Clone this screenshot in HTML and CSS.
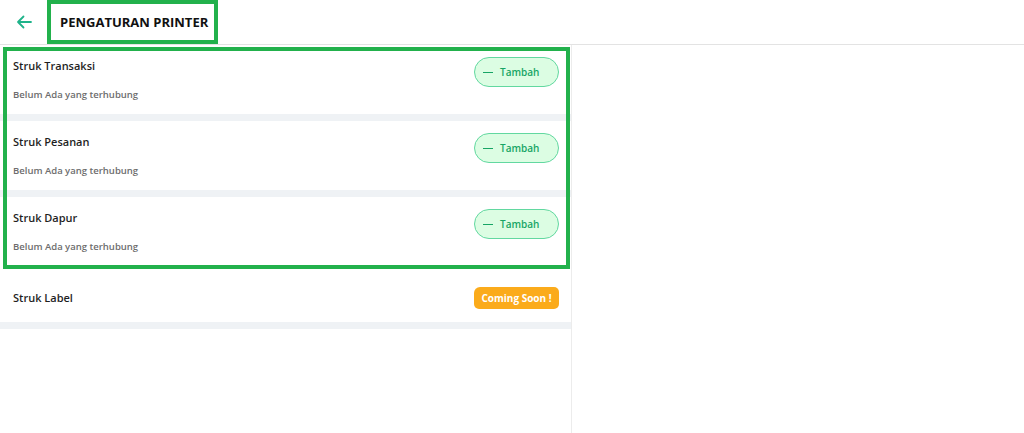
FILE: index.html
```html
<!DOCTYPE html>
<html lang="id">
<head>
<meta charset="utf-8">
<title>Pengaturan Printer</title>
<link rel="stylesheet" href="styles.css">
</head>
<body>
<header class="topbar">
  <button class="back" aria-label="Kembali">
    <svg width="16" height="14" viewBox="0 0 16 14" fill="none" stroke="#1fb38a" stroke-width="1.8" stroke-linecap="round" stroke-linejoin="round"><path d="M15 7H2M7.5 1.5L2 7l5.5 5.5"/></svg>
  </button>
  <h1 class="title">PENGATURAN PRINTER</h1>
</header>
<div class="layout">
  <section class="panel">
    <div class="group">
      <div class="row">
        <div class="info">
          <div class="name">Struk Transaksi</div>
          <div class="status">Belum Ada yang terhubung</div>
        </div>
        <button class="add"><span class="dash"></span>Tambah</button>
      </div>
      <div class="row">
        <div class="info">
          <div class="name">Struk Pesanan</div>
          <div class="status">Belum Ada yang terhubung</div>
        </div>
        <button class="add"><span class="dash"></span>Tambah</button>
      </div>
      <div class="row last">
        <div class="info">
          <div class="name">Struk Dapur</div>
          <div class="status">Belum Ada yang terhubung</div>
        </div>
        <button class="add"><span class="dash"></span>Tambah</button>
      </div>
    </div>
    <div class="row label-row">
      <div class="name">Struk Label</div>
      <span class="soon">Coming Soon !</span>
    </div>
  </section>
  <div class="blank"></div>
</div>
</body>
</html>
```
FILE: styles.css
```css
*, *::before, *::after { box-sizing: border-box; }
html, body { margin: 0; padding: 0; height: 100%; background: #fff; }
body {
  font-family: "Open Sans", "Noto Sans", sans-serif;
  color: #1f1f1f;
  display: flex;
  flex-direction: column;
}
.topbar {
  height: 45px;
  flex: none;
  display: flex;
  align-items: center;
  border-bottom: 1px solid #e3e3e3;
}
.back {
  border: 0;
  background: none;
  padding: 0;
  margin: 0 15px 0 16px;
  width: 16px;
  height: 14px;
  display: flex;
  cursor: pointer;
}
.title {
  margin: 0;
  height: 44px;
  width: 171px;
  border: 4px solid #22b14c;
  display: flex;
  align-items: center;
  padding-left: 9px;
  font-size: 13px;
  font-weight: 700;
  color: #111;
  white-space: nowrap;
}
.layout {
  flex: 1;
  display: flex;
}
.panel {
  width: 572px;
  border-right: 1px solid #ececec;
}
.blank { flex: 1; }
.group { position: relative; }
.group::after {
  content: "";
  position: absolute;
  left: 3px;
  top: 2px;
  width: 567px;
  height: 222px;
  border: 4px solid #22b14c;
  pointer-events: none;
}
.row {
  display: flex;
  justify-content: space-between;
  align-items: flex-start;
  padding: 12px 12px 12px 13px;
  border-bottom: 7px solid #eff2f5;
  height: 76px;
}
.row.last { border-bottom: 0; height: 70px; }
.info { display: flex; flex-direction: column; }
.name {
  font-size: 11px;
  font-weight: 600;
  line-height: 18px;
  color: #1f1f1f;
}
.status {
  margin-top: 13px;
  font-size: 9.5px;
  font-weight: 600;
  line-height: 14px;
  color: #6d6d6d;
}
.add {
  width: 85px;
  height: 30px;
  border-radius: 15px;
  border: 1px solid #62d8a0;
  background: #dcfde3;
  color: #17a565;
  font-family: inherit;
  font-size: 10px;
  font-weight: 600;
  display: flex;
  align-items: center;
  padding: 0 0 0 8px;
  cursor: pointer;
}
.dash {
  width: 10px;
  height: 1px;
  background: #17a565;
  margin-right: 7px;
}
.label-row {
  height: 62px;
  align-items: center;
  padding: 20px 12px 13px 13px;
}
.soon {
  width: 85px;
  height: 22px;
  border-radius: 6px 5px 5px 5px;
  background: #fbab1b;
  color: #fff;
  font-size: 10px;
  font-weight: 700;
  display: flex;
  align-items: center;
  justify-content: center;
}
```
